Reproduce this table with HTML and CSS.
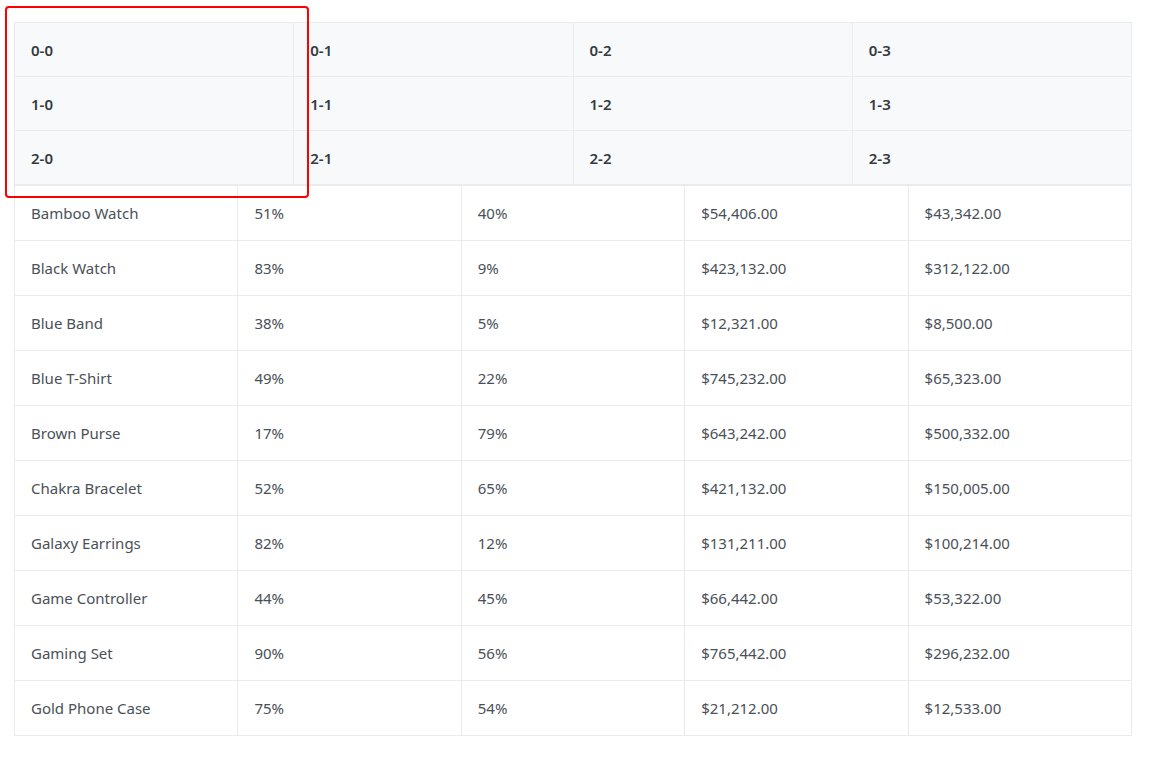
FILE: index.html
```html
<!DOCTYPE html>
<html>
<head>
<meta charset="utf-8">
<link rel="stylesheet" href="styles.css">
</head>
<body>
<div class="page">
  <div class="grid-wrap">
    <table class="head-table">
      <tr><td>0-0</td><td>0-1</td><td>0-2</td><td>0-3</td></tr>
      <tr><td>1-0</td><td>1-1</td><td>1-2</td><td>1-3</td></tr>
      <tr><td>2-0</td><td>2-1</td><td>2-2</td><td>2-3</td></tr>
    </table>
    <table class="body-table">
      <tr><td>Bamboo Watch</td><td>51%</td><td>40%</td><td>$54,406.00</td><td>$43,342.00</td></tr>
      <tr><td>Black Watch</td><td>83%</td><td>9%</td><td>$423,132.00</td><td>$312,122.00</td></tr>
      <tr><td>Blue Band</td><td>38%</td><td>5%</td><td>$12,321.00</td><td>$8,500.00</td></tr>
      <tr><td>Blue T-Shirt</td><td>49%</td><td>22%</td><td>$745,232.00</td><td>$65,323.00</td></tr>
      <tr><td>Brown Purse</td><td>17%</td><td>79%</td><td>$643,242.00</td><td>$500,332.00</td></tr>
      <tr><td>Chakra Bracelet</td><td>52%</td><td>65%</td><td>$421,132.00</td><td>$150,005.00</td></tr>
      <tr><td>Galaxy Earrings</td><td>82%</td><td>12%</td><td>$131,211.00</td><td>$100,214.00</td></tr>
      <tr><td>Game Controller</td><td>44%</td><td>45%</td><td>$66,442.00</td><td>$53,322.00</td></tr>
      <tr><td>Gaming Set</td><td>90%</td><td>56%</td><td>$765,442.00</td><td>$296,232.00</td></tr>
      <tr><td>Gold Phone Case</td><td>75%</td><td>54%</td><td>$21,212.00</td><td>$12,533.00</td></tr>
    </table>
    <div class="highlight"></div>
  </div>
</div>
</body>
</html>
```
FILE: styles.css
```css
html, body {
  margin: 0;
  padding: 0;
  background: #ffffff;
}
body {
  font-family: "Noto Sans", "Open Sans", "Liberation Sans", sans-serif;
  font-size: 15px;
}
.page {
  padding: 22px 29px 0 14px;
}
.grid-wrap {
  position: relative;
  width: 1118px;
}
table {
  width: 100%;
  border-collapse: separate;
  border-spacing: 0;
  table-layout: fixed;
  border-left: 1px solid #e9ecef;
  border-top: 1px solid #e9ecef;
}
td {
  border-right: 1px solid #e9ecef;
  border-bottom: 1px solid #e9ecef;
  box-sizing: border-box;
  padding: 0 16px;
  white-space: nowrap;
}
.head-table td {
  background: #f8f9fa;
  height: 54px;
  color: #343a40;
  font-weight: 600;
}
.body-table td {
  height: 55px;
  color: #495057;
}
.highlight {
  position: absolute;
  left: -9px;
  top: -16px;
  width: 300px;
  height: 188px;
  border: 2px solid #ff0000;
  border-radius: 4px;
  pointer-events: none;
}
```
